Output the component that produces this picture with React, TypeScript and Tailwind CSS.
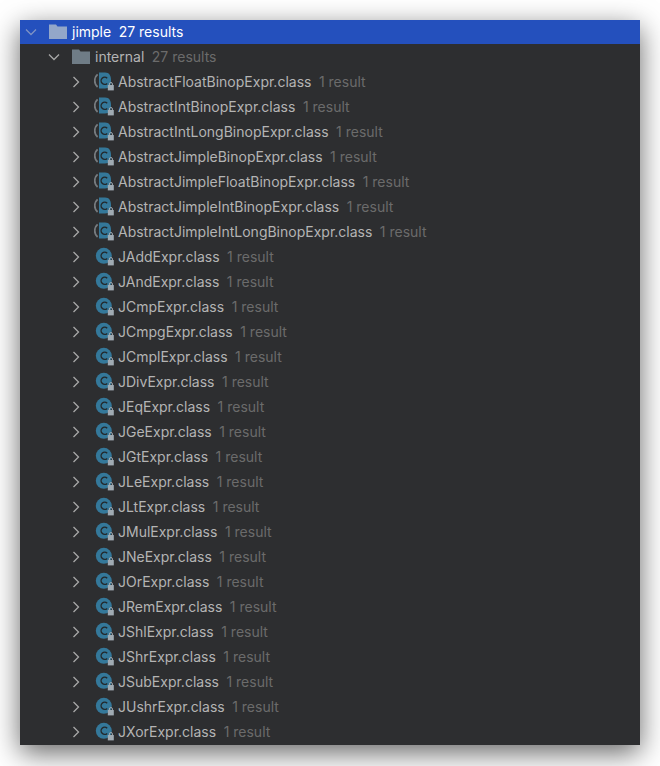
import React from 'react';

const abstractItems = [
  'AbstractFloatBinopExpr.class',
  'AbstractIntBinopExpr.class',
  'AbstractIntLongBinopExpr.class',
  'AbstractJimpleBinopExpr.class',
  'AbstractJimpleFloatBinopExpr.class',
  'AbstractJimpleIntBinopExpr.class',
  'AbstractJimpleIntLongBinopExpr.class',
];

const classItems = [
  'JAddExpr.class',
  'JAndExpr.class',
  'JCmpExpr.class',
  'JCmpgExpr.class',
  'JCmplExpr.class',
  'JDivExpr.class',
  'JEqExpr.class',
  'JGeExpr.class',
  'JGtExpr.class',
  'JLeExpr.class',
  'JLtExpr.class',
  'JMulExpr.class',
  'JNeExpr.class',
  'JOrExpr.class',
  'JRemExpr.class',
  'JShlExpr.class',
  'JShrExpr.class',
  'JSubExpr.class',
  'JUshrExpr.class',
  'JXorExpr.class',
];

const ChevronDown = ({ color }: { color: string }) => (
  <svg width="12" height="12" viewBox="0 0 12 12" fill="none" stroke={color} strokeWidth="1.3">
    <path d="M1 3.5 L6 8.5 L11 3.5" />
  </svg>
);

const ChevronRight = () => (
  <svg width="12" height="12" viewBox="0 0 12 12" fill="none" stroke="#a8a8a8" strokeWidth="1.3">
    <path d="M3.5 1 L8.5 6 L3.5 11" />
  </svg>
);

const Folder = ({ color }: { color: string }) => (
  <svg width="18" height="15" viewBox="0 0 18 15" fill={color}>
    <path d="M0 0.5 H7 L8.5 2.5 H18 V15 H0 Z" />
  </svg>
);

const ClassIcon = ({ isAbstract }: { isAbstract: boolean }) => (
  <svg width="22" height="20" viewBox="0 0 22 20" fill="none">
    {isAbstract ? (
      <>
        <path d="M3.6 2.4 A8.4 8.4 0 0 0 3.6 15" stroke="#777c80" strokeWidth="1.8" />
        <path d="M5 0.6 H11 C15.5 0.6 17 4 17 8.6 C17 13.2 15.5 16.6 11 16.6 H5 Z" fill="#34789a" />
      </>
    ) : (
      <circle cx="9.8" cy="8.8" r="8" fill="#34789a" />
    )}
    <path d="M13.2 6.2 A3.6 3.6 0 1 0 13.2 11.4" stroke="#23282b" strokeWidth="1.4" />
    <path d="M15.4 13 V12 A1.5 1.5 0 0 1 18.4 12 V13" stroke="#a0abb3" strokeWidth="1" />
    <rect x="13.8" y="13" width="6" height="5.4" fill="#a0abb3" />
  </svg>
);

const Row = ({ name, isAbstract }: { name: string; isAbstract: boolean }) => (
  <div className="flex items-center h-[25px]">
    <div className="w-[24px] flex items-center">
      <ChevronRight />
    </div>
    <div className="w-[24px] h-[20px]">
      <ClassIcon isAbstract={isAbstract} />
    </div>
    <span className="text-[#b4b4b4]">{name}</span>
    <span className="ml-[7.5px] text-[#6b6b6b]">1 result</span>
  </div>
);

export default function App() {
  return (
    <div className="bg-white h-[766px] pt-[20px] px-[20px] font-['Inter',sans-serif] text-[14px] whitespace-nowrap">
      <div className="w-[620px] h-[725px] bg-[#2d2e30] overflow-hidden shadow-[0_8px_26px_rgba(0,0,0,0.6)]">
        <div className="flex items-center h-[24px] pb-[1px] bg-[#2450bd] text-white">
          <div className="w-[29px] pl-[5px] flex items-center">
            <ChevronDown color="#7f93c4" />
          </div>
          <div className="w-[23px] flex items-center">
            <Folder color="#93a7c9" />
          </div>
          <span>jimple</span>
          <span className="ml-[7.5px]">27 results</span>
        </div>
        <div className="flex items-center h-[25px] pl-[28px]">
          <div className="w-[24px] flex items-center">
            <ChevronDown color="#a8a8a8" />
          </div>
          <div className="w-[23px] flex items-center">
            <Folder color="#6f7c86" />
          </div>
          <span className="text-[#b4b4b4]">internal</span>
          <span className="ml-[7.5px] text-[#6b6b6b]">27 results</span>
        </div>
        <div className="pl-[50px]">
          {abstractItems.map((name) => (
            <Row key={name} name={name} isAbstract />
          ))}
          {classItems.map((name) => (
            <Row key={name} name={name} isAbstract={false} />
          ))}
        </div>
      </div>
    </div>
  );
}
